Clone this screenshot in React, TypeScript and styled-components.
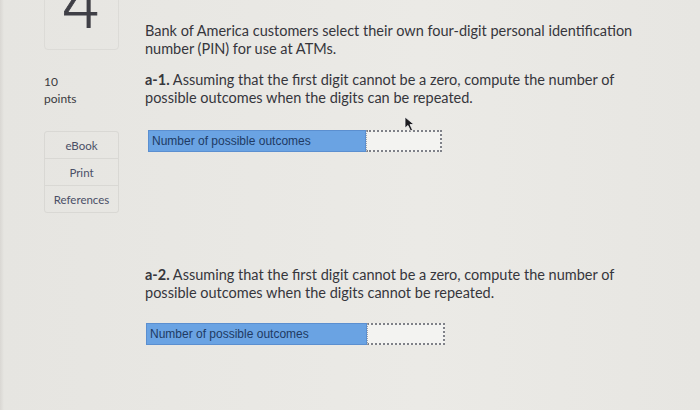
import React from 'react'
import styled, { createGlobalStyle } from 'styled-components'

const GlobalStyle = createGlobalStyle`
  html, body {
    margin: 0;
    padding: 0;
    background: #e9e8e4;
  }
  body {
    font-family: Lato, "Open Sans", "Liberation Sans", sans-serif;
    color: #34343a;
    overflow: hidden;
  }
`

const Page = styled.div`
  position: relative;
  width: 700px;
  height: 410px;
  display: flex;
  align-items: flex-start;
  gap: 26px;
  padding-left: 44px;
  box-sizing: border-box;
  background: linear-gradient(90deg, #d9d7d3 0px, #e6e5e1 4px, #ebeae6 60%, #e7e6e2 100%);
`

const Side = styled.div`
  width: 75px;
  display: flex;
  flex-direction: column;
`

const NumberBox = styled.div`
  margin-top: -30px;
  height: 78px;
  border: 1px solid #dcdbd7;
  border-radius: 4px;
  display: flex;
  justify-content: center;
  align-items: flex-end;
  overflow: hidden;
`

const BigDigit = styled.span`
  font-family: "DejaVu Sans", sans-serif;
  font-weight: 300;
  font-size: 64px;
  line-height: 1;
  color: #3f3f46;
  margin-bottom: 12px;
  -webkit-text-stroke: 0.8px #3f3f46;
`

const Points = styled.div`
  margin-top: 23px;
  font-size: 12px;
  line-height: 17px;
  color: #3a3a40;
`

const Tools = styled.div`
  margin-top: 24px;
  border: 1px solid #d9d8d4;
  border-radius: 3px;
  display: flex;
  flex-direction: column;
`

const Tool = styled.div`
  height: 26px;
  display: flex;
  align-items: center;
  justify-content: center;
  font-size: 11.5px;
  color: #4a4f66;
  & + & {
    border-top: 1px solid #d9d8d4;
  }
`

const Main = styled.div`
  display: flex;
  flex-direction: column;
  padding-top: 22px;
`

const Text = styled.p<{ $top?: number }>`
  margin: ${(p) => p.$top ?? 0}px 0 0;
  font-size: 14.5px;
  line-height: 17.5px;
  color: #36363c;
`

const AnswerRow = styled.div<{ $top: number; $left?: number }>`
  display: flex;
  margin-top: ${(p) => p.$top}px;
  margin-left: ${(p) => p.$left ?? 0}px;
  height: 22px;
`

const Label = styled.div<{ $width: number }>`
  width: ${(p) => p.$width}px;
  background: #6aa3e3;
  border: 1px solid #5b8fd0;
  box-sizing: border-box;
  display: flex;
  align-items: center;
  padding-left: 3px;
  font-family: "Liberation Sans", Arial, sans-serif;
  font-size: 12px;
  color: #203a63;
`

const Field = styled.div<{ $width: number }>`
  width: ${(p) => p.$width}px;
  background: #f3f3f1;
  border: 2px dotted #7f8188;
  border-left: 1px dotted #a0a2a6;
  box-sizing: border-box;
`

const Cursor = styled.svg`
  position: absolute;
  left: 404px;
  top: 116px;
`

export default function App() {
  return (
    <>
      <GlobalStyle />
      <Page>
        <Side>
          <NumberBox>
            <BigDigit>4</BigDigit>
          </NumberBox>
          <Points>
            10
            <br />
            points
          </Points>
          <Tools>
            <Tool>eBook</Tool>
            <Tool>Print</Tool>
            <Tool>References</Tool>
          </Tools>
        </Side>
        <Main>
          <Text>
            Bank of America customers select their own four-digit personal identification
            <br />
            number (PIN) for use at ATMs.
          </Text>
          <Text $top={14}>
            <b>a-1.</b> Assuming that the first digit cannot be a zero, compute the number of
            <br />
            possible outcomes when the digits can be repeated.
          </Text>
          <AnswerRow $top={24} $left={3}>
            <Label $width={218}>Number of possible outcomes</Label>
            <Field $width={76} />
          </AnswerRow>
          <Text $top={114}>
            <b>a-2.</b> Assuming that the first digit cannot be a zero, compute the number of
            <br />
            possible outcomes when the digits cannot be repeated.
          </Text>
          <AnswerRow $top={22} $left={1}>
            <Label $width={221}>Number of possible outcomes</Label>
            <Field $width={78} />
          </AnswerRow>
        </Main>
        <Cursor width="12" height="16" viewBox="0 0 12 16">
          <path d="M1 1 L1 12 L4 9.5 L6.5 15 L8.5 14 L6 8.5 L10 8.5 Z" fill="#1c1c20" stroke="#f2f2f2" strokeWidth="0.8" />
        </Cursor>
      </Page>
    </>
  )
}
